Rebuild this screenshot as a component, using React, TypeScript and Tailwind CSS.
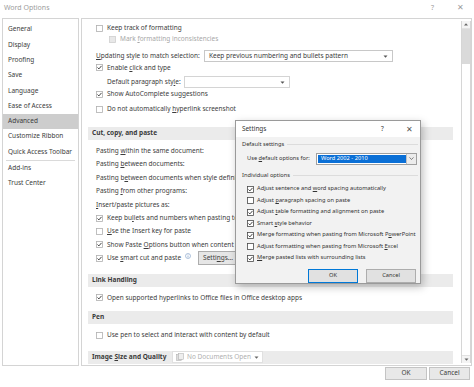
import React from 'react';

function Box({ checked, disabled, dark }: { checked?: boolean; disabled?: boolean; dark?: boolean }) {
  const stroke = dark ? '#4a4a4a' : disabled ? '#cfcfcf' : '#b0b0b0';
  const fill = disabled ? '#e8e8e8' : '#ffffff';
  return (
    <svg width="7" height="7" viewBox="0 0 7 7" className="shrink-0">
      <rect x="0.5" y="0.5" width="6" height="6" fill={fill} stroke={stroke} strokeWidth="0.8" />
      {checked && (
        <path d="M1.5 3.5 L2.9 4.9 L5.5 1.9" fill="none" stroke="#2b2b2b" strokeWidth="0.9" />
      )}
    </svg>
  );
}

function Caret({ color = '#555' }: { color?: string }) {
  return (
    <svg width="5" height="3" viewBox="0 0 5 3" className="shrink-0">
      <path d="M0.5 0.5 L4.5 0.5 L2.5 2.8 Z" fill={color} />
    </svg>
  );
}

function CheckRow({
  children,
  checked,
  disabled,
  className,
}: {
  children: React.ReactNode;
  checked?: boolean;
  disabled?: boolean;
  className?: string;
}) {
  return (
    <div className={'flex items-center gap-[4px] ' + (className ?? '')}>
      <Box checked={checked} disabled={disabled} />
      <span className={disabled ? 'text-[#a8a8a8]' : ''}>{children}</span>
    </div>
  );
}

function Line({ children }: { children: React.ReactNode }) {
  return (
    <div className="flex h-[13.4px] items-center">
      <span>{children}</span>
    </div>
  );
}

function Band({ children }: { children: React.ReactNode }) {
  return (
    <div className="flex h-[13px] items-center bg-[#ebebeb] px-[4px] font-bold text-[#3a3a3a]">
      <span>{children}</span>
    </div>
  );
}

const navItems = [
  'General',
  'Display',
  'Proofing',
  'Save',
  'Language',
  'Ease of Access',
  'Advanced',
  'Customize Ribbon',
  'Quick Access Toolbar',
];

function Nav() {
  return (
    <div className="ml-[2px] h-[348px] w-[77px] shrink-0 border border-[#d4d4d4] pt-[3px]">
      {navItems.map((n) => (
        <div
          key={n}
          className={
            'flex h-[15.3px] items-center pl-[5px] ' + (n === 'Advanced' ? 'bg-[#cdcdcd]' : '')
          }
        >
          {n}
        </div>
      ))}
      <div className="mx-[3px] h-px bg-[#dadada]" />
      <div className="flex h-[15.3px] items-center pl-[5px]">Add-ins</div>
      <div className="flex h-[15.3px] items-center pl-[5px]">Trust Center</div>
    </div>
  );
}

function Scrollbar() {
  return (
    <div className="my-[2px] flex w-[10px] shrink-0 flex-col border-x border-[#d6d6d6] bg-white">
      <div className="flex h-[8px] items-center justify-center border-b border-[#e2e2e2] bg-[#f4f4f4]">
        <svg width="4" height="3" viewBox="0 0 4 3">
          <path d="M0 2.6 L4 2.6 L2 0.3 Z" fill="#666" />
        </svg>
      </div>
      <div className="h-[35px] bg-[#dadada]" />
      <div className="flex-1" />
      <div className="flex h-[8px] items-center justify-center border-t border-[#e2e2e2] bg-[#f4f4f4]">
        <Caret color="#666" />
      </div>
    </div>
  );
}

function Content() {
  return (
    <div className="flex h-[348px] w-[391px] shrink-0 border border-[#d4d4d4]">
      <div className="flex-1 overflow-hidden pl-[6px] pr-[8px]">
        <div className="pl-[8px]">
          <CheckRow className="mt-[4.7px] h-[10px]">Keep track of formatting</CheckRow>
          <CheckRow disabled className="ml-[13px] mt-[1px] h-[10px]">
            Mark <u>f</u>ormatting inconsistencies
          </CheckRow>
          <div className="mt-[5.6px] flex h-[12px] items-center">
            <span className="w-[108px] shrink-0">
              <u>U</u>pdating style to match selection:
            </span>
            <div className="flex h-[12px] w-[189px] items-center justify-between border border-[#c8c8c8] pl-[4px] pr-[4px]">
              <span>Keep previous numbering and bullets pattern</span>
              <Caret />
            </div>
          </div>
          <CheckRow checked className="mt-[0.7px] h-[10px]">
            Enable <u>c</u>lick and type
          </CheckRow>
          <div className="mt-[3.3px] flex h-[12px] items-center pl-[11px]">
            <span className="w-[77px] shrink-0">
              Default paragraph sty<u>l</u>e:
            </span>
            <div className="flex h-[12px] w-[106px] items-center justify-end border border-[#d4d4d4] pr-[4px]">
              <Caret />
            </div>
          </div>
          <CheckRow checked className="mt-[1.4px] h-[10px]">
            Show AutoComplete suggestions
          </CheckRow>
          <CheckRow className="mt-[5px] h-[10px]">
            Do not automatically <u>h</u>yperlink screenshot
          </CheckRow>
        </div>

        <div className="mt-[12.3px]">
          <Band>Cut, copy, and paste</Band>
        </div>
        <div className="mt-[4.6px] pl-[8px]">
          <Line>
            Pasting <u>w</u>ithin the same document:
          </Line>
          <Line>
            Pasting <u>b</u>etween documents:
          </Line>
          <Line>
            Pasting b<u>e</u>tween documents when style definitions conflict:
          </Line>
          <Line>
            Pasting <u>f</u>rom other programs:
          </Line>
          <Line>
            <u>I</u>nsert/paste pictures as:
          </Line>
          <CheckRow checked className="h-[13.4px]">
            Keep bu<u>l</u>lets and numbers when pasting text with Keep Text Only option
          </CheckRow>
          <CheckRow className="h-[13.4px]">
            <u>U</u>se the Insert key for paste
          </CheckRow>
          <CheckRow checked className="h-[13.4px]">
            Show Paste <u>O</u>ptions button when content is pasted
          </CheckRow>
          <div className="flex h-[13.4px] items-center gap-[4px]">
            <Box checked />
            <span>
              Use <u>s</u>mart cut and paste
            </span>
            <svg width="6" height="6" viewBox="0 0 6 6" className="-mt-[4px] shrink-0">
              <circle cx="3" cy="3" r="2.5" fill="none" stroke="#7a9cc6" strokeWidth="0.6" />
              <path d="M3 2.5 L3 4.6 M3 1.4 L3 1.9" stroke="#7a9cc6" strokeWidth="0.7" />
            </svg>
            <div className="ml-[3px] flex h-[14px] w-[40px] items-center justify-center border border-[#adadad] bg-[#e6e6e6]">
              <span>
                Setti<u>n</u>gs...
              </span>
            </div>
          </div>
        </div>

        <div className="mt-[8.8px]">
          <Band>Link Handling</Band>
        </div>
        <div className="mt-[4.3px] pl-[8px]">
          <CheckRow checked className="h-[13.4px]">
            Open supported hyperlinks to Office files in Office desktop apps
          </CheckRow>
        </div>

        <div className="mt-[6.3px]">
          <Band>Pen</Band>
        </div>
        <div className="mt-[4.6px] pl-[8px]">
          <CheckRow className="h-[13.4px]">
            Use pen to select and interact with content by default
          </CheckRow>
        </div>

        <div className="mt-[8.7px] flex h-[13px] items-center bg-[#ebebeb] pl-[4px] text-[#3a3a3a]">
          <span className="w-[80px] shrink-0 font-bold">
            Image <u>S</u>ize and Quality
          </span>
          <div className="flex h-[12px] w-[91px] items-center gap-[3px] border border-[#e0e0e0] bg-white pl-[3px] pr-[4px] text-[#b0b0b0]">
            <svg width="8" height="8" viewBox="0 0 8 8" className="shrink-0">
              <rect x="0.5" y="1.5" width="5" height="6" fill="#ddd" stroke="#aaa" strokeWidth="0.5" />
              <rect x="2.5" y="0.5" width="5" height="6" fill="#eee" stroke="#aaa" strokeWidth="0.5" />
            </svg>
            <span className="flex-1">No Documents Open</span>
            <Caret color="#666" />
          </div>
        </div>
      </div>
      <Scrollbar />
    </div>
  );
}

function SettingsDialog() {
  const opts: [React.ReactNode, boolean][] = [
    [<>Adjust sentence and <u>w</u>ord spacing automatically</>, true],
    [<>Adjust <u>p</u>aragraph spacing on paste</>, false],
    [<>Adjust <u>t</u>able formatting and alignment on paste</>, true],
    [<>Smart <u>s</u>tyle behavior</>, true],
    [<>Merge formatting when pasting from Microsoft P<u>o</u>werPoint</>, true],
    [<>Adjust formatting when pasting from Microsoft <u>E</u>xcel</>, false],
    [<><u>M</u>erge pasted lists with surrounding lists</>, true],
  ];
  return (
    <div className="absolute left-[235px] top-[120px] flex h-[164px] w-[186px] flex-col border border-[#9a9a9a] bg-[#f2f2f2] text-[5.7px] text-[#333] shadow-[2px_3px_8px_rgba(0,0,0,0.25)]">
      <div className="relative flex h-[16px] items-center bg-white pl-[6px] text-[6.4px]">
        <span>Settings</span>
        <span className="absolute left-[145px]">?</span>
        <span className="absolute left-[170px] text-[8px] text-[#555]">✕</span>
      </div>
      <div className="flex h-[16px] items-center gap-[3px] pl-[6px] pr-[2px]">
        <span>Default settings</span>
        <div className="h-px flex-1 bg-[#dcdcdc]" />
      </div>
      <div className="flex h-[12px] items-center pl-[11px]">
        <span className="w-[69px] shrink-0">
          Use <u>d</u>efault options for:
        </span>
        <div className="flex h-[12px] w-[101px] items-center border border-[#a0a0a0] bg-white">
          <div className="ml-px flex h-[8px] flex-1 items-center bg-[#0a6fd6] pl-[3px] text-white">
            Word 2002 - 2010
          </div>
          <div className="flex h-full w-[10px] items-center justify-center border-l border-[#c0c0c0] bg-[#ececec]">
            <svg width="5" height="3" viewBox="0 0 5 3">
              <path d="M0.5 0.4 L2.5 2.5 L4.5 0.4" fill="none" stroke="#555" strokeWidth="0.7" />
            </svg>
          </div>
        </div>
      </div>
      <div className="mt-[3px] flex h-[16px] items-center gap-[3px] pl-[6px] pr-[2px]">
        <span>Individual options</span>
        <div className="h-px flex-1 bg-[#dcdcdc]" />
      </div>
      <div className="pl-[11px]">
        {opts.map(([label, c], i) => (
          <div key={i} className="flex h-[11.5px] items-center gap-[3px]">
            <Box checked={c} dark />
            <span>{label}</span>
          </div>
        ))}
      </div>
      <div className="mt-[5px] flex gap-[8px] pl-[72px]">
        <div className="flex h-[14px] w-[50px] items-center justify-center border border-[#0078d7] bg-[#e1e1e1]">
          OK
        </div>
        <div className="flex h-[14px] w-[50px] items-center justify-center border border-[#adadad] bg-[#e1e1e1]">
          Cancel
        </div>
      </div>
    </div>
  );
}

export default function App() {
  return (
    <div className="relative h-[387px] w-[474px] overflow-hidden whitespace-nowrap bg-white font-['Noto_Sans',sans-serif] text-[6.5px] leading-none text-[#3c3c3c]">
      <div className="relative flex h-[14px] items-center pl-[4px] text-[7px] text-[#9c9c9c]">
        <span>Word Options</span>
        <span className="absolute left-[431px]">?</span>
        <span className="absolute left-[457px] text-[8px]">✕</span>
      </div>
      <div className="mt-[4px] flex gap-[2px]">
        <Nav />
        <Content />
      </div>
      <div className="mt-px flex justify-end gap-[2px] pr-[4px]">
        <div className="flex h-[13px] w-[42px] items-center justify-center border border-[#c4c4c4] bg-[#e8e8e8]">
          OK
        </div>
        <div className="flex h-[13px] w-[41px] items-center justify-center border border-[#c4c4c4] bg-[#e8e8e8]">
          Cancel
        </div>
      </div>
      <SettingsDialog />
    </div>
  );
}
